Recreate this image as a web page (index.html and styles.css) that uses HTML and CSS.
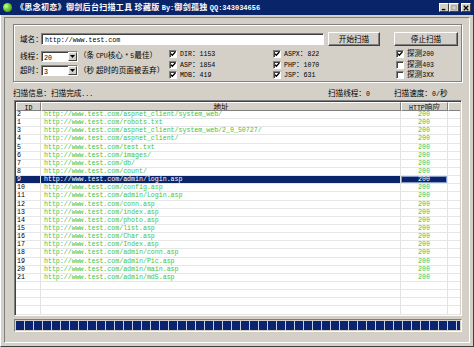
FILE: index.html
```html
<!DOCTYPE html>
<html>
<head>
<meta charset="utf-8">
<link rel="stylesheet" href="styles.css">
</head>
<body>
<div class="win">
  <div class="title">
    <span class="ticon"></span>
    <span class="ttext">《思念初恋》御剑后台扫描工具 珍藏版 <span class="tm">By:</span>御剑孤独 <span class="tm">QQ:343034656</span></span>
    <span class="tbtns">
      <span class="tb"><svg width="9" height="8" viewBox="0 0 9 8"><rect x="2" y="5" width="4" height="1.5" fill="#000"/></svg></span>
      <span class="tb"><svg width="9" height="8" viewBox="0 0 9 8"><rect x="2" y="1.5" width="5" height="4.5" fill="none" stroke="#9a9a9a" stroke-width="1"/></svg></span>
      <span class="tb close"><svg width="9" height="8" viewBox="0 0 9 8"><path d="M2 1.5 L7 6.5 M7 1.5 L2 6.5" stroke="#000" stroke-width="1.4"/></svg></span>
    </span>
  </div>
  <div class="frame">
    <div class="panel">
      <div class="group">
        <div class="row1">
          <span class="lbl l14">域名：</span>
          <span class="input"><span class="m">http://www.test.com</span></span>
          <span class="btn b1">开始扫描</span>
          <span class="btn b2">停止扫描</span>
        </div>
        <div class="opts">
          <div class="left">
            <div class="lrow"><span class="lbl">线程：</span><span class="combo"><span class="cv"><span class="m">20</span></span><span class="dd"><svg width="5" height="3" viewBox="0 0 5 3"><path d="M0 0H5L2.5 3Z" fill="#000"/></svg></span></span><span class="hint">（条 <span class="m">CPU</span>核心 <span class="m">*</span> <span class="m">5</span>最佳）</span></div>
            <div class="lrow"><span class="lbl">超时：</span><span class="combo"><span class="cv"><span class="m">3</span></span><span class="dd"><svg width="5" height="3" viewBox="0 0 5 3"><path d="M0 0H5L2.5 3Z" fill="#000"/></svg></span></span><span class="hint">（秒 超时的页面被丢弃）</span></div>
          </div>
          <div class="chk c1">
            <div class="crow"><span class="box on"></span><span class="t"><span class="m">DIR</span>：<span class="m">1153</span></span></div>
            <div class="crow"><span class="box on"></span><span class="t"><span class="m">ASP</span>：<span class="m">1854</span></span></div>
            <div class="crow"><span class="box on"></span><span class="t"><span class="m">MDB</span>：<span class="m">419</span></span></div>
          </div>
          <div class="chk c2">
            <div class="crow"><span class="box on"></span><span class="t"><span class="m">ASPX</span>：<span class="m">822</span></span></div>
            <div class="crow"><span class="box on"></span><span class="t"><span class="m">PHP</span>：<span class="m">1070</span></span></div>
            <div class="crow"><span class="box on"></span><span class="t"><span class="m">JSP</span>：<span class="m">631</span></span></div>
          </div>
          <div class="chk c3">
            <div class="crow"><span class="box on"></span><span class="t">探测<span class="m">200</span></span></div>
            <div class="crow"><span class="box"></span><span class="t">探测<span class="m">403</span></span></div>
            <div class="crow"><span class="box"></span><span class="t">探测<span class="m">3XX</span></span></div>
          </div>
        </div>
      </div>
      <div class="info">
        <span class="i1">扫描信息：扫描完成<span class="m">...</span></span>
        <span class="i2">扫描线程：<span class="m">0</span></span>
        <span class="i3">扫描速度：<span class="m">0/</span>秒</span>
      </div>
      <div class="list">
        <div class="hdr">
          <span class="h hid"><span class="m">ID</span></span>
          <span class="h haddr">地址</span>
          <span class="h hcode"><span class="m">HTTP</span>响应</span>
          <span class="h hrest"></span>
        </div>
        <div class="rows">
          <div class="r"><span class="id">2</span><span class="u">http://www.test.com/aspnet_client/system_web/</span><span class="s">200</span><span class="e"></span></div>
          <div class="r"><span class="id">1</span><span class="u">http://www.test.com/robots.txt</span><span class="s">200</span><span class="e"></span></div>
          <div class="r"><span class="id">3</span><span class="u">http://www.test.com/aspnet_client/system_web/2_0_50727/</span><span class="s">200</span><span class="e"></span></div>
          <div class="r"><span class="id">4</span><span class="u">http://www.test.com/aspnet_client/</span><span class="s">200</span><span class="e"></span></div>
          <div class="r"><span class="id">5</span><span class="u">http://www.test.com/test.txt</span><span class="s">200</span><span class="e"></span></div>
          <div class="r"><span class="id">6</span><span class="u">http://www.test.com/images/</span><span class="s">200</span><span class="e"></span></div>
          <div class="r"><span class="id">7</span><span class="u">http://www.test.com/db/</span><span class="s">200</span><span class="e"></span></div>
          <div class="r"><span class="id">8</span><span class="u">http://www.test.com/count/</span><span class="s">200</span><span class="e"></span></div>
          <div class="r sel"><span class="id">9</span><span class="u">http://www.test.com/admin/login.asp</span><span class="s">200</span><span class="e"></span></div>
          <div class="r"><span class="id">10</span><span class="u">http://www.test.com/config.asp</span><span class="s">200</span><span class="e"></span></div>
          <div class="r"><span class="id">11</span><span class="u">http://www.test.com/admin/Login.asp</span><span class="s">200</span><span class="e"></span></div>
          <div class="r"><span class="id">12</span><span class="u">http://www.test.com/conn.asp</span><span class="s">200</span><span class="e"></span></div>
          <div class="r"><span class="id">13</span><span class="u">http://www.test.com/index.asp</span><span class="s">200</span><span class="e"></span></div>
          <div class="r"><span class="id">14</span><span class="u">http://www.test.com/photo.asp</span><span class="s">200</span><span class="e"></span></div>
          <div class="r"><span class="id">15</span><span class="u">http://www.test.com/list.asp</span><span class="s">200</span><span class="e"></span></div>
          <div class="r"><span class="id">16</span><span class="u">http://www.test.com/Char.asp</span><span class="s">200</span><span class="e"></span></div>
          <div class="r"><span class="id">17</span><span class="u">http://www.test.com/Index.asp</span><span class="s">200</span><span class="e"></span></div>
          <div class="r"><span class="id">18</span><span class="u">http://www.test.com/admin/conn.asp</span><span class="s">200</span><span class="e"></span></div>
          <div class="r"><span class="id">19</span><span class="u">http://www.test.com/admin/Pic.asp</span><span class="s">200</span><span class="e"></span></div>
          <div class="r"><span class="id">20</span><span class="u">http://www.test.com/admin/main.asp</span><span class="s">200</span><span class="e"></span></div>
          <div class="r"><span class="id">21</span><span class="u">http://www.test.com/admin/md5.asp</span><span class="s">200</span><span class="e"></span></div>
          <div class="r"><span class="id"></span><span class="u"></span><span class="s"></span><span class="e"></span></div>
          <div class="r"><span class="id"></span><span class="u"></span><span class="s"></span><span class="e"></span></div>
          <div class="r"><span class="id"></span><span class="u"></span><span class="s"></span><span class="e"></span></div>
          <div class="r"><span class="id"></span><span class="u"></span><span class="s"></span><span class="e"></span></div>
        </div>
      </div>
      <div class="progress"></div>
    </div>
  </div>
</div>
</body>
</html>
```

FILE: styles.css
```css
* { box-sizing: border-box; }
html, body { margin: 0; padding: 0; background: #d4d0c8; }
body {
  font-family: "Noto Sans CJK SC", sans-serif;
  font-size: 7.6px;
  color: #000;
  line-height: 1;
}
.m { font-family: "Liberation Mono", monospace; font-size: 6.6px; }
.win { width: 474px; height: 347px; background: #d4d0c8; display: flex; flex-direction: column; overflow: hidden; }
.title {
  height: 15px; background: #0a246a; color: #fff; display: flex; align-items: center;
  padding-left: 3px; flex: none;
}
.ticon {
  width: 9px; height: 9px; border-radius: 50%;
  background: radial-gradient(circle at 35% 35%, #d8ffb0 0, #6fd030 40%, #2f8a10 100%);
  margin-right: 4px; flex: none;
}
.ttext { font-weight: bold; font-size: 8px; letter-spacing: 0.32px; white-space: nowrap; line-height: 15px; }
.tm { font-family: "Liberation Mono", monospace; font-size: 7px; letter-spacing: 0; }
.tbtns { margin-left: auto; display: flex; margin-right: 3px; }
.tb {
  width: 10px; height: 9px; background: #d4d0c8; display: flex; align-items: center; justify-content: center;
  border-top: 1px solid #fff; border-left: 1px solid #fff; border-right: 1px solid #404040; border-bottom: 1px solid #404040;
}
.tb.close { margin-left: 2px; }
.frame { flex: 1; padding: 2px 3px 3px 3px; border-bottom: 1px solid #404040; border-left: 1px solid #fff; border-right: 1px solid #404040; }
.panel {
  height: 100%; border: 1px solid #808080; border-right-color: #fff; border-bottom-color: #fff;
  padding: 0 0 0 8px;
}
.group {
  margin-top: 6px; width: 449px; height: 58px;
  border: 1px solid #808080; box-shadow: inset 1px 1px 0 #fff, 1px 1px 0 #fff;
  padding: 7px 0 0 6px;
}
.row1 { display: flex; align-items: center; height: 14px; }
.lbl { width: 21px; flex: none; white-space: nowrap; line-height: 12px; }
.l14 { line-height: 14px; }
.input {
  width: 283px; height: 12px; background: #fff; flex: none;
  border-top: 1px solid #808080; border-left: 1px solid #808080; border-right: 1px solid #fff; border-bottom: 1px solid #fff;
  box-shadow: inset 1px 1px 0 #404040; line-height: 10px; padding-left: 3px; white-space: nowrap;
}
.btn {
  height: 14px; background: #d4d0c8; text-align: center; line-height: 12px; flex: none;
  border-top: 1px solid #fff; border-left: 1px solid #fff; border-right: 1px solid #404040; border-bottom: 1px solid #404040;
  box-shadow: inset -1px -1px 0 #808080;
}
.b1 { width: 52px; margin-left: 4px; }
.b2 { width: 64px; margin-left: 14px; }
.opts { display: flex; margin-top: 3px; }
.left { width: 149px; flex: none; padding-top: 1px; }
.lrow { display: flex; align-items: center; height: 12px; margin-bottom: 2px; white-space: nowrap; }
.combo {
  width: 37px; height: 11px; background: #fff; flex: none; display: flex;
  border-top: 1px solid #808080; border-left: 1px solid #808080; border-right: 1px solid #fff; border-bottom: 1px solid #fff;
  box-shadow: inset 1px 1px 0 #404040;
}
.cv { flex: 1; line-height: 9px; padding-left: 2px; }
.dd {
  width: 9px; height: 9px; background: #d4d0c8; display: flex; align-items: center; justify-content: center;
  border-top: 1px solid #fff; border-left: 1px solid #fff; border-right: 1px solid #404040; border-bottom: 1px solid #404040;
}
.hint { margin-left: 1px; line-height: 12px; }
.chk { flex: none; }
.c1 { width: 104px; }
.c2 { width: 123px; }
.crow { height: 10.5px; display: flex; align-items: center; white-space: nowrap; }
.t { line-height: 10px; }
.box {
  width: 8px; height: 8px; background: #fff; margin-right: 3px; flex: none;
  border-top: 1px solid #808080; border-left: 1px solid #808080; border-right: 1px solid #fff; border-bottom: 1px solid #fff;
  box-shadow: inset 1px 1px 0 #404040;
  display: inline-block;
}
.box.on {
  background: #fff url("data:image/svg+xml;utf8,<svg xmlns='http://www.w3.org/2000/svg' width='6' height='6' viewBox='0 0 6 6'><path d='M0.8 2.6 L2.3 4.2 L5.3 1' fill='none' stroke='black' stroke-width='1.3'/></svg>") no-repeat center;
}
.info { display: flex; height: 9px; margin-top: 6px; white-space: nowrap; line-height: 9px; }
.info > span { display: block; }
.i1 { width: 315px; }
.i2 { width: 66px; }
.list {
  margin-top: 3px; margin-left: 1px; width: 448px; height: 216px; background: #fff;
  border-top: 1px solid #808080; border-left: 1px solid #808080; border-right: 1px solid #fff; border-bottom: 1px solid #fff;
  box-shadow: inset 1px 1px 0 #404040, inset -1px -1px 0 #d4d0c8;
  padding: 1px; overflow: hidden;
}
.hdr { display: grid; grid-template-columns: 25px 360px 47px 1fr; height: 9px; }
.h {
  background: #d4d0c8; display: block; text-align: center; line-height: 7px; white-space: nowrap; overflow: hidden;
  border-top: 1px solid #fff; border-left: 1px solid #fff; border-right: 1px solid #808080; border-bottom: 1px solid #808080;
}
.hrest { border-right: none; }
.r { display: grid; grid-template-columns: 25px 360px 47px 1fr; height: 8.15px; }
.r > span { border-bottom: 1px solid #e6e6e6; border-right: 1px solid #e2e2e2; display: block; line-height: 7px; white-space: nowrap; overflow: hidden; }
.r > .e { border-right: none; }
.id { font-family: "Liberation Mono", monospace; font-size: 6.6px; padding-left: 1px; }
.u { font-family: "Liberation Mono", monospace; font-size: 6.6px; color: #3cc43c; padding-left: 3px; }
.s { font-family: "Liberation Mono", monospace; font-size: 6.6px; color: #3cc43c; text-align: center; }
.r.sel .id, .r.sel .u, .r.sel .s { background: #0a246a; color: #fff; }
.r.sel .s { box-shadow: inset 0 0 0 1px #8a9ac8; }
.progress {
  margin-top: 3px; margin-left: 1px; width: 448px; height: 13px;
  border-top: 1px solid #808080; border-left: 1px solid #808080; border-right: 1px solid #fff; border-bottom: 1px solid #fff;
  padding: 1px;
  background-color: #d4d0c8;
  background-image: repeating-linear-gradient(90deg, #0a2470 0, #0a2470 8px, #c8cce0 8px, #c8cce0 9px);
  background-origin: content-box; background-clip: content-box;
}
```
